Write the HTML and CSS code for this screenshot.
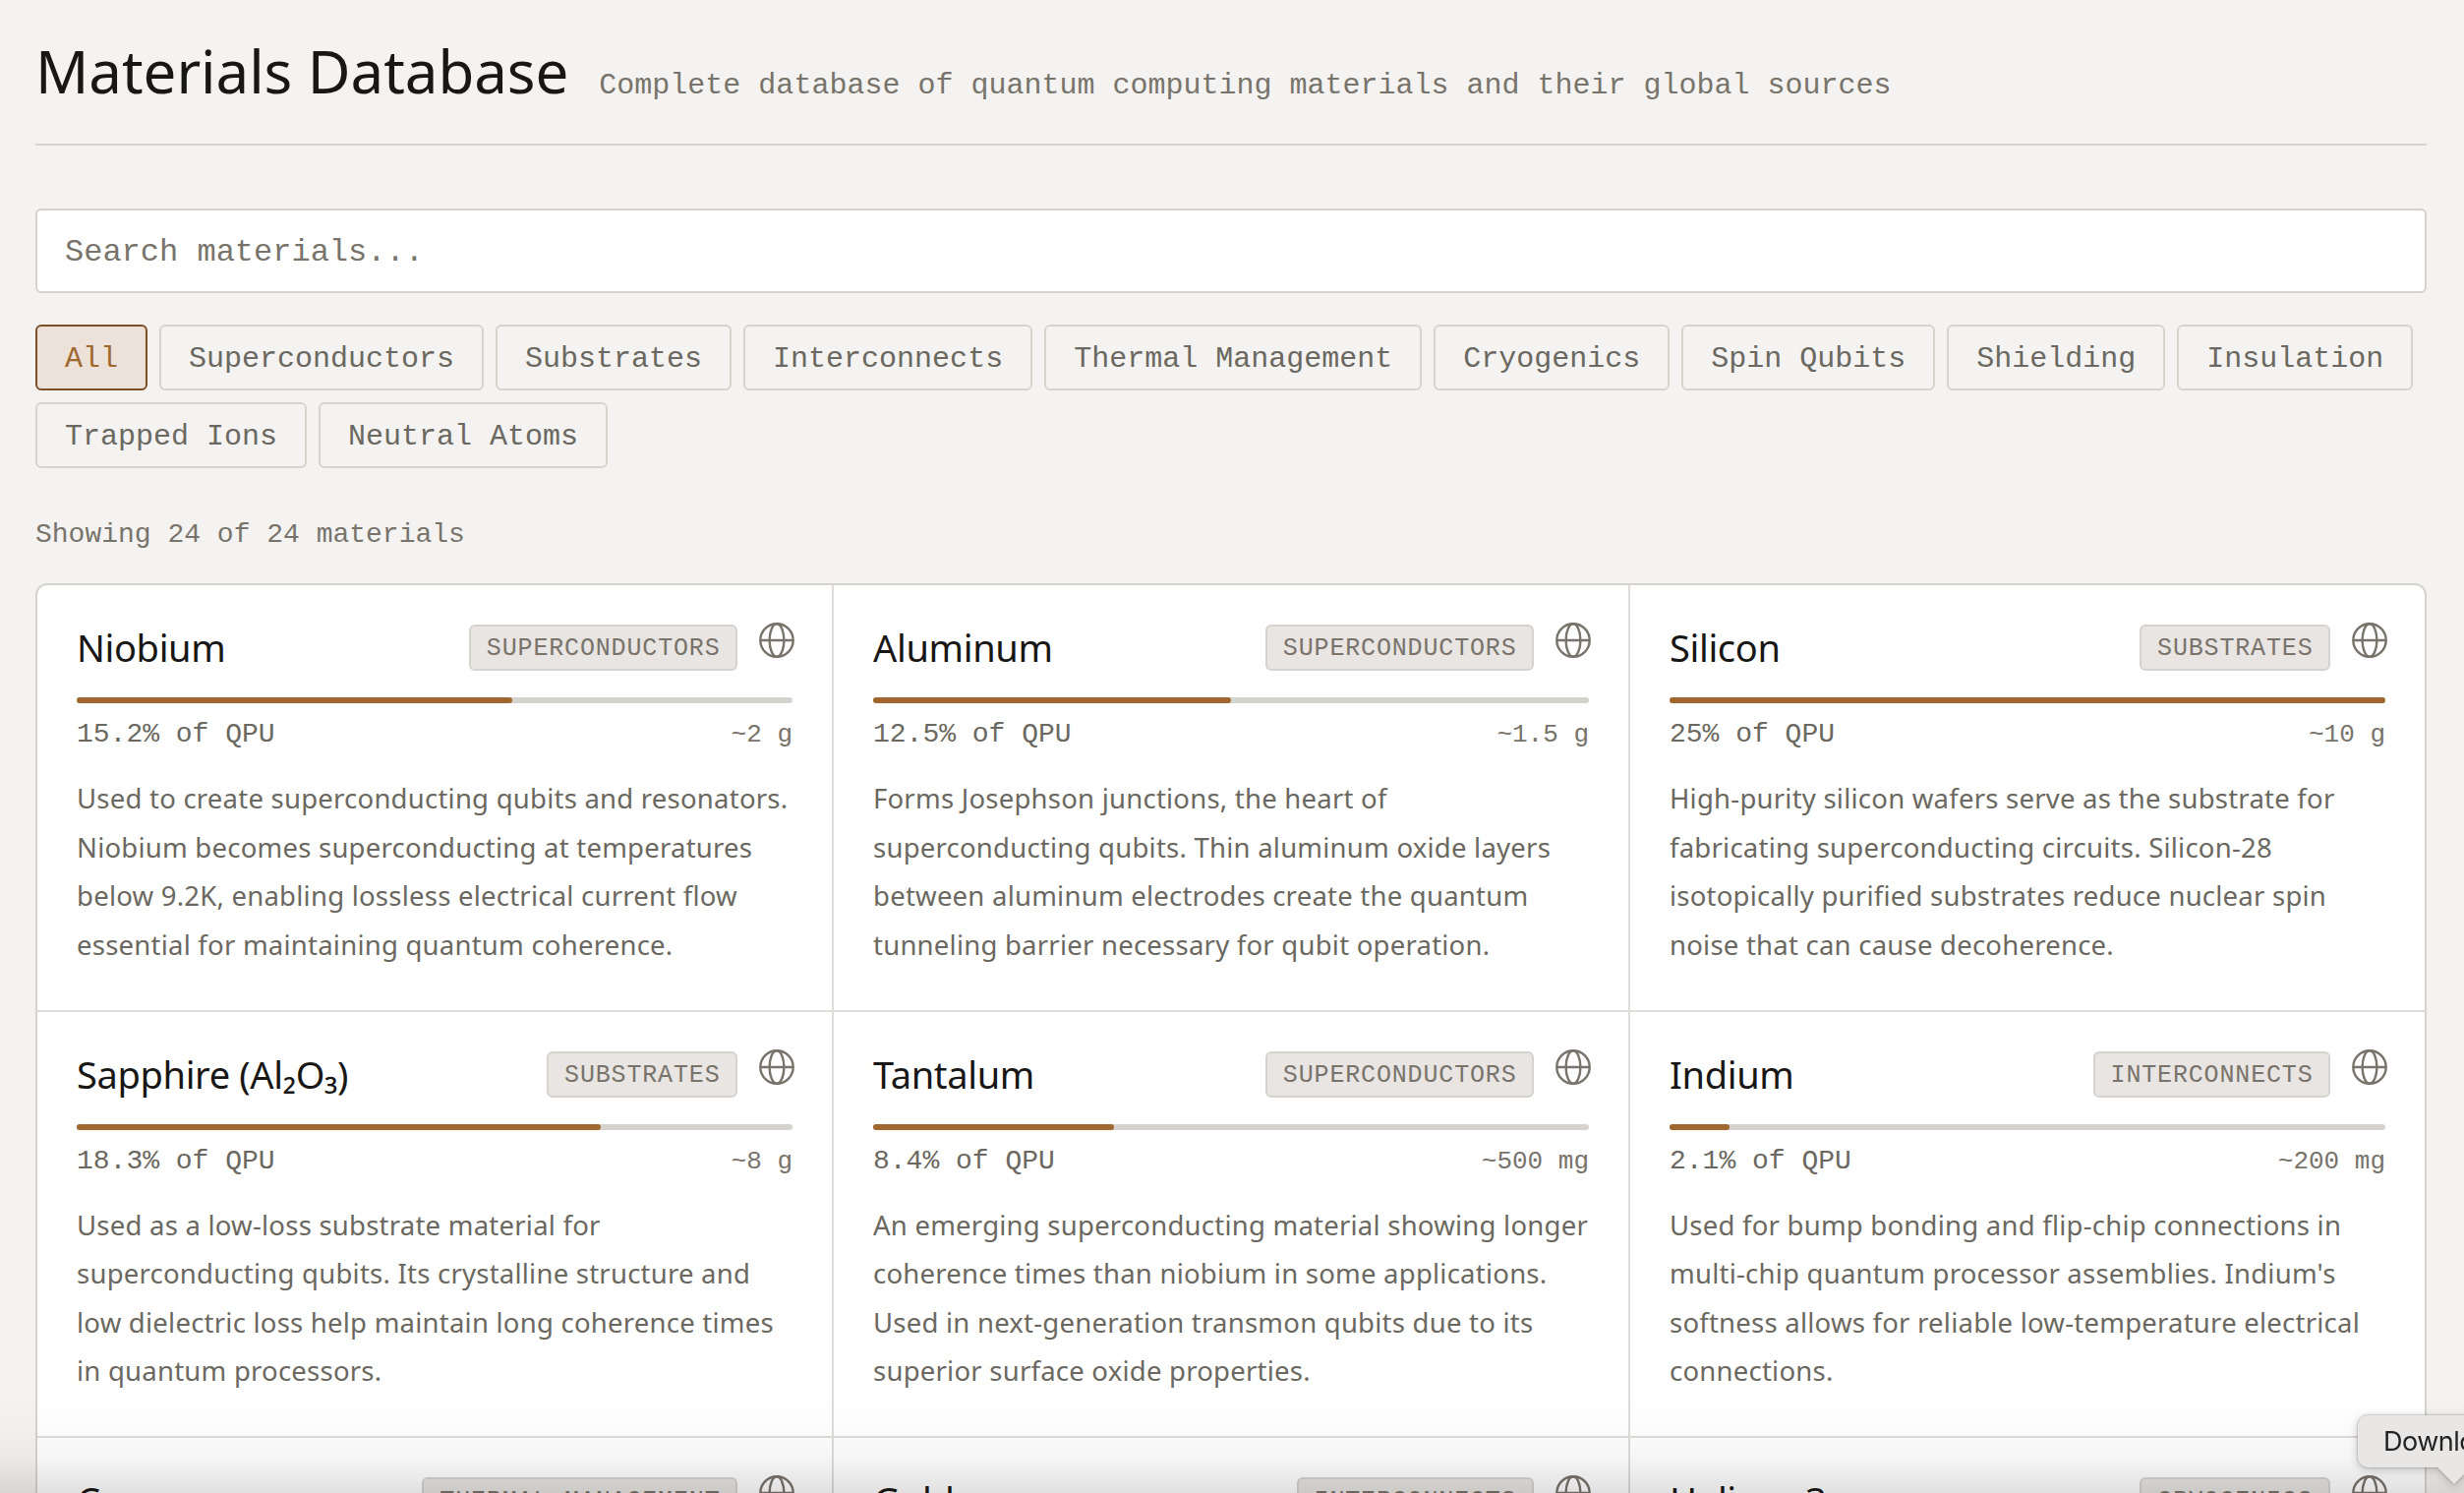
FILE: index.html
```html
<!DOCTYPE html>
<html lang="en">

<head>
  <meta charset="utf-8">
  <meta name="viewport" content="width=device-width">
  <title>Materials Database</title>
  <link rel="stylesheet" href="styles.css">
</head>

<body>
  <svg class="sprite" width="0" height="0">
    <symbol id="globe" viewBox="0 0 36 36">
      <circle cx="18" cy="18" r="16.7" />
      <ellipse cx="18" cy="18" rx="7.4" ry="16.7" />
      <path d="M1.3 18h33.4" />
    </symbol>
  </svg>

  <header class="page-header">
    <h1>Materials Database</h1>
    <p>Complete database of quantum computing materials and their global sources</p>
  </header>

  <input class="search" type="text" placeholder="Search materials...">

  <div class="filters">
    <button class="chip active">All</button>
    <button class="chip">Superconductors</button>
    <button class="chip">Substrates</button>
    <button class="chip">Interconnects</button>
    <button class="chip">Thermal Management</button>
    <button class="chip">Cryogenics</button>
    <button class="chip">Spin Qubits</button>
    <button class="chip">Shielding</button>
    <button class="chip">Insulation</button>
    <button class="chip">Trapped Ions</button>
    <button class="chip">Neutral Atoms</button>
  </div>

  <p class="count">Showing 24 of 24 materials</p>

  <main class="grid">
    <article class="card">
      <div class="card-head">
        <h2>Niobium</h2>
        <span class="badge">SUPERCONDUCTORS</span>
        <svg class="globe"><use href="#globe" /></svg>
      </div>
      <div class="bar"><div class="fill" style="width: 60.8%"></div></div>
      <div class="meta"><span>15.2% of QPU</span><span class="amount">~2 g</span></div>
      <p class="desc">Used to create superconducting qubits and resonators.<br>Niobium becomes superconducting at temperatures<br>below 9.2K, enabling lossless electrical current flow<br>essential for maintaining quantum coherence.</p>
    </article>

    <article class="card">
      <div class="card-head">
        <h2>Aluminum</h2>
        <span class="badge">SUPERCONDUCTORS</span>
        <svg class="globe"><use href="#globe" /></svg>
      </div>
      <div class="bar"><div class="fill" style="width: 50%"></div></div>
      <div class="meta"><span>12.5% of QPU</span><span class="amount">~1.5 g</span></div>
      <p class="desc">Forms Josephson junctions, the heart of<br>superconducting qubits. Thin aluminum oxide layers<br>between aluminum electrodes create the quantum<br>tunneling barrier necessary for qubit operation.</p>
    </article>

    <article class="card">
      <div class="card-head">
        <h2>Silicon</h2>
        <span class="badge">SUBSTRATES</span>
        <svg class="globe"><use href="#globe" /></svg>
      </div>
      <div class="bar"><div class="fill" style="width: 100%"></div></div>
      <div class="meta"><span>25% of QPU</span><span class="amount">~10 g</span></div>
      <p class="desc">High-purity silicon wafers serve as the substrate for<br>fabricating superconducting circuits. Silicon-28<br>isotopically purified substrates reduce nuclear spin<br>noise that can cause decoherence.</p>
    </article>

    <article class="card">
      <div class="card-head">
        <h2>Sapphire (Al₂O₃)</h2>
        <span class="badge">SUBSTRATES</span>
        <svg class="globe"><use href="#globe" /></svg>
      </div>
      <div class="bar"><div class="fill" style="width: 73.2%"></div></div>
      <div class="meta"><span>18.3% of QPU</span><span class="amount">~8 g</span></div>
      <p class="desc">Used as a low-loss substrate material for<br>superconducting qubits. Its crystalline structure and<br>low dielectric loss help maintain long coherence times<br>in quantum processors.</p>
    </article>

    <article class="card">
      <div class="card-head">
        <h2>Tantalum</h2>
        <span class="badge">SUPERCONDUCTORS</span>
        <svg class="globe"><use href="#globe" /></svg>
      </div>
      <div class="bar"><div class="fill" style="width: 33.6%"></div></div>
      <div class="meta"><span>8.4% of QPU</span><span class="amount">~500 mg</span></div>
      <p class="desc">An emerging superconducting material showing longer<br>coherence times than niobium in some applications.<br>Used in next-generation transmon qubits due to its<br>superior surface oxide properties.</p>
    </article>

    <article class="card">
      <div class="card-head">
        <h2>Indium</h2>
        <span class="badge">INTERCONNECTS</span>
        <svg class="globe"><use href="#globe" /></svg>
      </div>
      <div class="bar"><div class="fill" style="width: 8.4%"></div></div>
      <div class="meta"><span>2.1% of QPU</span><span class="amount">~200 mg</span></div>
      <p class="desc">Used for bump bonding and flip-chip connections in<br>multi-chip quantum processor assemblies. Indium's<br>softness allows for reliable low-temperature electrical<br>connections.</p>
    </article>

    <article class="card">
      <div class="card-head">
        <h2>Copper</h2>
        <span class="badge">THERMAL MANAGEMENT</span>
        <svg class="globe"><use href="#globe" /></svg>
      </div>
    </article>

    <article class="card">
      <div class="card-head">
        <h2>Gold</h2>
        <span class="badge">INTERCONNECTS</span>
        <svg class="globe"><use href="#globe" /></svg>
      </div>
    </article>

    <article class="card">
      <div class="card-head">
        <h2>Helium-3</h2>
        <span class="badge">CRYOGENICS</span>
        <svg class="globe"><use href="#globe" /></svg>
      </div>
    </article>
  </main>

  <div class="shade"></div>
  <div class="tooltip">Downloads</div>
</body>

</html>
```
FILE: styles.css
```css
* {
  box-sizing: border-box;
}

html {
  overflow: hidden;
}

body {
  margin: 0;
  height: 1518px;
  padding: 0 38px 0 36px;
  overflow: hidden;
  position: relative;
  background-color: #f4f3f1;
  color: #181715;
  font-family: "Noto Sans", sans-serif;
}

h1, h2, p {
  margin: 0;
  font-weight: 400;
}

.sprite {
  position: absolute;
}

.page-header {
  display: flex;
  align-items: baseline;
  gap: 31px;
  height: 148px;
  padding-top: 31px;
  border-bottom: 2px solid #d5d4cd;
  white-space: nowrap;
}

.page-header h1 {
  font-size: 60px;
  line-height: 82px;
  letter-spacing: -0.05px;
}

.page-header p {
  font-family: "Liberation Mono", monospace;
  font-size: 30px;
  color: #78736b;
}

.search {
  display: block;
  width: 100%;
  height: 86px;
  margin-top: 64px;
  padding: 3px 28px 0;
  border: 2px solid #d6d3cf;
  border-radius: 6px;
  background-color: white;
  font-family: "Liberation Mono", monospace;
  font-size: 32px;
}

.search::placeholder {
  color: #78736b;
}

.filters {
  display: flex;
  flex-wrap: wrap;
  gap: 12px;
  margin-top: 32px;
}

.chip {
  height: 67px;
  padding: 3px 28px 0;
  border: 2px solid #d5d4cd;
  border-radius: 6px;
  background-color: transparent;
  color: #6a6860;
  font-family: "Liberation Mono", monospace;
  font-size: 30px;
}

.chip.active {
  background-color: #ece2da;
  border-color: #7d4f26;
  color: #a0682f;
}

.count {
  height: 117px;
  padding-top: 51px;
  font-family: "Liberation Mono", monospace;
  font-size: 28px;
  line-height: 34px;
  color: #78736b;
}

.grid {
  display: grid;
  grid-template-columns: repeat(3, 1fr);
  grid-auto-rows: 431.5px;
  gap: 2px;
  border: 2px solid #d6d3cf;
  border-radius: 12px;
  overflow: hidden;
  background-color: #e0dcd7;
}

.card {
  padding: 40px;
  background-color: white;
}

.card-head {
  display: flex;
  align-items: flex-start;
  height: 74px;
}

.card-head h2 {
  flex: 1;
  font-size: 38px;
  line-height: 47px;
  letter-spacing: -0.35px;
  white-space: nowrap;
}

.badge {
  height: 47px;
  padding: 0 15.5px 0 16px;
  border: 2px solid #d6d3cf;
  border-radius: 6px;
  background-color: #e8e5e2;
  color: #78736b;
  font-family: "Liberation Mono", monospace;
  font-size: 25px;
  line-height: 46px;
  letter-spacing: 0.84px;
}

.globe {
  width: 36px;
  height: 36px;
  margin: -2px -2px 0 22px;
  fill: none;
  stroke: #78736b;
  stroke-width: 2.4;
}

.bar {
  height: 6px;
  border-radius: 3px;
  background-color: #d6d3cf;
}

.fill {
  height: 6px;
  border-radius: 3px;
  background-color: #a0682f;
}

.meta {
  display: flex;
  justify-content: space-between;
  align-items: baseline;
  margin-top: 11px;
  font-family: "Liberation Mono", monospace;
  font-size: 28px;
  line-height: 41px;
  color: #6a6860;
}

.amount {
  font-size: 26px;
  color: #78736b;
}

.desc {
  margin-top: 19px;
  font-size: 27.5px;
  line-height: 49.6px;
  letter-spacing: 0.23px;
  white-space: nowrap;
  color: #6a6860;
}

/* fade at the bottom edge of the window */
.shade {
  position: absolute;
  left: 0;
  right: 0;
  bottom: 0;
  height: 100px;
  background: linear-gradient(rgba(0, 0, 0, 0), rgba(0, 0, 0, 0.01) 30%, rgba(0, 0, 0, 0.04) 65%, rgba(0, 0, 0, 0.12));
}

.tooltip {
  position: absolute;
  left: 2398px;
  top: 1439px;
  width: 196px;
  height: 53px;
  padding-left: 26px;
  border-radius: 10px;
  background-color: #e8e7e6;
  color: #222;
  font-family: Inter, sans-serif;
  font-size: 27px;
  line-height: 54px;
  letter-spacing: -0.5px;
  filter: drop-shadow(0 0 1px rgba(0, 0, 0, 0.35)) drop-shadow(0 2px 5px rgba(0, 0, 0, 0.2));
}

.tooltip::after {
  content: "";
  position: absolute;
  left: 80px;
  top: 52px;
  border: 18px solid transparent;
  border-top-color: #e8e7e6;
  border-bottom: 0;
}
```
